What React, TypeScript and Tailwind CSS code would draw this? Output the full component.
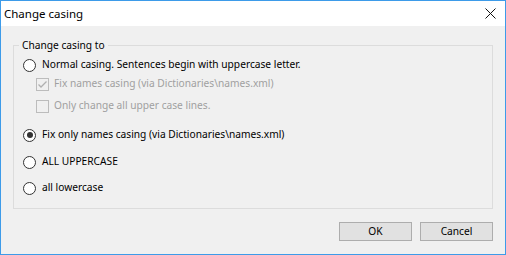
import React from "react";

function Radio({ checked }: { checked?: boolean }) {
  return (
    <span className="w-[13px] h-[13px] rounded-full border border-[#333333] bg-white flex items-center justify-center shrink-0">
      {checked && <span className="w-[6px] h-[6px] rounded-full bg-[#333333]" />}
    </span>
  );
}

function Check({ checked }: { checked?: boolean }) {
  return (
    <span className="w-[13px] h-[13px] border border-[#bcbcbc] bg-[#f0f0f0] flex items-center justify-center shrink-0">
      {checked && (
        <svg width="11" height="11" viewBox="0 0 11 11">
          <path d="M1.5 5.5 L4 8 L9.5 2.5" fill="none" stroke="#b0b0b0" strokeWidth="1.3" />
        </svg>
      )}
    </span>
  );
}

export default function App() {
  return (
    <div className="w-[506px] h-[255px] border border-[#3d9be9] bg-[#f0f0f0] flex flex-col text-[10.2px] text-black font-['Segoe_UI','Noto_Sans',sans-serif]">
      <div className="h-[25px] bg-white flex items-center justify-between pl-[3px] pr-[9px] shrink-0">
        <span className="text-[11.5px] leading-none">Change casing</span>
        <svg width="11" height="11" viewBox="0 0 11 11">
          <path d="M0.5 0.5 L10.5 10.5 M10.5 0.5 L0.5 10.5" stroke="#111" strokeWidth="1" />
        </svg>
      </div>
      <div className="flex flex-col px-[12px] pt-[11px]">
        <fieldset className="border border-[#dcdcdc] h-[172px] rounded-none">
          <legend className="ml-[5px] px-[3px] h-[16px] leading-[16px]">Change casing to</legend>
          <div className="h-[18px] mt-[3px] pl-[9px] flex items-center gap-[6px]">
            <Radio />
            <span>Normal casing. Sentences begin with uppercase letter.</span>
          </div>
          <div className="h-[18px] mt-[1px] pl-[22px] flex items-center gap-[5px] text-[#a0a0a0]">
            <Check checked />
            <span>Fix names casing (via Dictionaries\names.xml)</span>
          </div>
          <div className="h-[18px] mt-[4px] pl-[22px] flex items-center gap-[5px] text-[#a0a0a0]">
            <Check />
            <span>Only change all upper case lines.</span>
          </div>
          <div className="h-[18px] mt-[11px] pl-[9px] flex items-center gap-[6px]">
            <Radio checked />
            <span>Fix only names casing (via Dictionaries\names.xml)</span>
          </div>
          <div className="h-[18px] mt-[9px] pl-[9px] flex items-center gap-[6px]">
            <Radio />
            <span>ALL UPPERCASE</span>
          </div>
          <div className="h-[18px] mt-[8px] pl-[9px] flex items-center gap-[6px]">
            <Radio />
            <span>all lowercase</span>
          </div>
        </fieldset>
        <div className="flex justify-end gap-[8px] mt-[13px]">
          <button className="w-[73px] h-[19px] bg-[#e1e1e1] border border-[#adadad] text-[10.2px] leading-none flex items-center justify-center">
            OK
          </button>
          <button className="w-[73px] h-[19px] bg-[#e1e1e1] border border-[#adadad] text-[10.2px] leading-none flex items-center justify-center">
            Cancel
          </button>
        </div>
      </div>
    </div>
  );
}
